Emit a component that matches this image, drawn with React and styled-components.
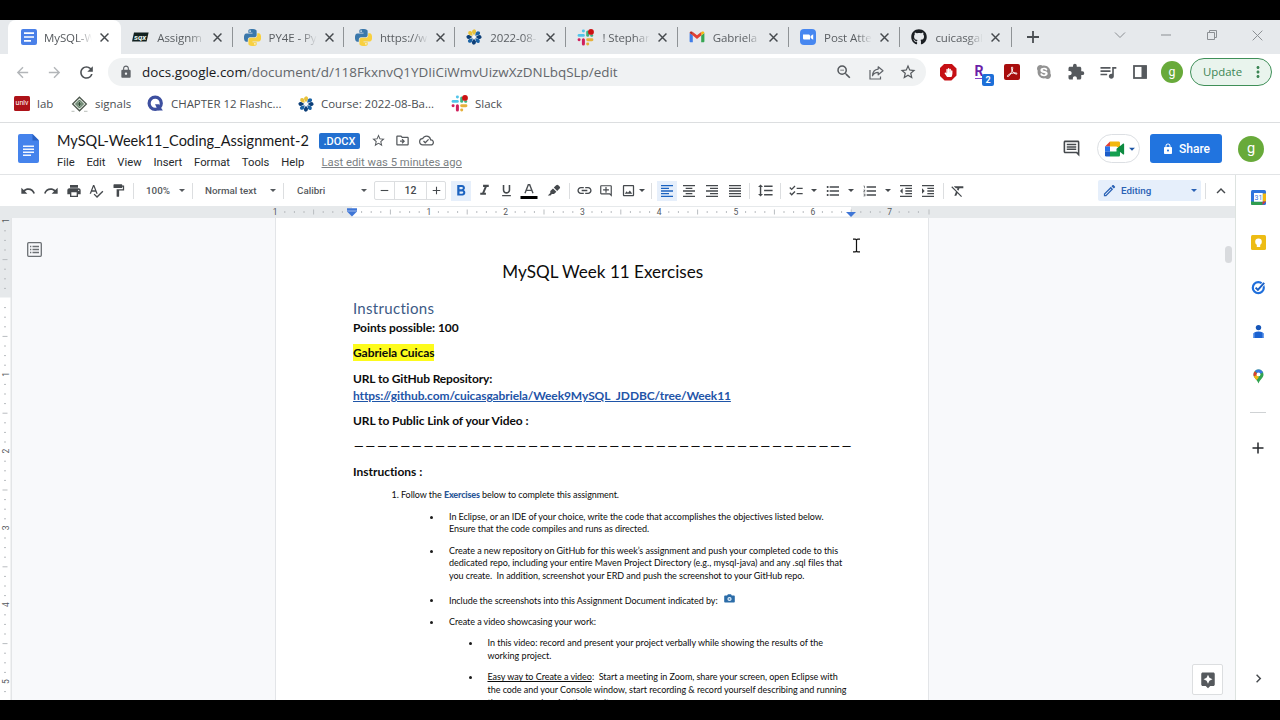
import styled, { createGlobalStyle, css } from "styled-components";
import {
  MdUndo,
  MdRedo,
  MdPrint,
  MdSpellcheck,
  MdFormatPaint,
  MdArrowDropDown,
  MdAdd,
  MdRemove,
  MdFormatBold,
  MdFormatItalic,
  MdFormatUnderlined,
  MdLink,
  MdOutlineAddComment,
  MdOutlineImage,
  MdFormatAlignLeft,
  MdFormatAlignCenter,
  MdFormatAlignRight,
  MdFormatAlignJustify,
  MdFormatLineSpacing,
  MdChecklist,
  MdFormatListBulleted,
  MdFormatListNumbered,
  MdFormatIndentDecrease,
  MdFormatIndentIncrease,
  MdFormatClear,
  MdOutlineEdit,
  MdKeyboardArrowUp,
  MdStarBorder,
  MdOutlineDriveFileMove,
  MdOutlineCloudDone,
  MdOutlineInsertComment,
  MdOutlineLock,
  MdLock,
  MdExtension,
  MdQueueMusic,
  MdMoreVert,
  MdAssistant,
  MdChevronRight,
  MdArrowBack,
  MdArrowForward,
  MdRefresh,
  MdZoomOut,
} from "react-icons/md";
import { FaGithub, FaSkype, FaHandPaper } from "react-icons/fa";

const DocsFavicon = () => (
  <svg width="16" height="16" viewBox="0 0 16 16">
    <rect width="16" height="16" rx="2" fill="#4a80e8" />
    <path d="M3 4.2h10M3 8h10M3 11.8h7" stroke="#fff" strokeWidth="1.7" />
  </svg>
);

const SqxIcon = () => (
  <svg width="17" height="16" viewBox="0 0 17 16">
    <path d="M2 3.5h14.6l-2 9H0z" fill="#12211f" />
    <text x="2" y="10.8" fontSize="8" fontWeight="bold" fontStyle="italic" fontFamily="Roboto, sans-serif" fill="#e9f5ef">
      sqx
    </text>
  </svg>
);

const PythonIcon = () => (
  <svg width="17" height="17" viewBox="0 0 24 24">
    <path
      fill="#3b78ab"
      d="M14.25.18l.9.2.73.26.59.3.45.32.34.34.25.34.16.33.1.3.04.26.02.2-.01.13V8.5l-.05.63-.13.55-.21.46-.26.38-.3.31-.33.25-.35.19-.35.14-.33.1-.3.07-.26.04-.21.02H8.77l-.69.05-.59.14-.5.22-.41.27-.33.32-.27.35-.2.36-.15.37-.1.35-.07.32-.04.27-.02.21v3.06H3.17l-.21-.03-.28-.07-.32-.12-.35-.18-.36-.26-.36-.36-.35-.46-.32-.59-.28-.73-.21-.88-.14-1.05-.05-1.23.06-1.22.16-1.04.24-.87.32-.71.36-.57.4-.44.42-.33.42-.24.4-.16.36-.1.32-.05.24-.01h.16l.06.01h8.16v-.83H6.18l-.01-2.75-.02-.37.05-.34.11-.31.17-.28.25-.26.31-.23.38-.2.44-.18.51-.15.58-.12.64-.1.71-.06.77-.04.84-.02 1.27.05z"
    />
    <path
      fill="#f8d040"
      d="M21.1 6.11l.28.06.32.12.35.18.36.27.36.35.35.47.32.59.28.73.21.88.14 1.04.05 1.23-.06 1.23-.16 1.04-.24.86-.32.71-.36.57-.4.45-.42.33-.42.24-.4.16-.36.09-.32.05-.24.02-.16-.01h-8.22v.82h5.84l.01 2.76.02.36-.05.34-.11.31-.17.29-.25.25-.31.24-.38.2-.44.17-.51.15-.58.13-.64.09-.71.07-.77.04-.84.01-1.27-.04-1.07-.14-.9-.2-.73-.25-.59-.3-.45-.33-.34-.34-.25-.34-.16-.33-.1-.3-.04-.25-.02-.2.01-.13v-5.34l.05-.64.13-.54.21-.46.26-.38.3-.32.33-.24.35-.2.35-.14.33-.1.3-.06.26-.04.21-.02.13-.01h5.84l.69-.05.59-.14.5-.21.41-.28.33-.32.27-.35.2-.36.15-.36.1-.35.07-.32.04-.28.02-.21V6.07h2.09z"
    />
    <circle cx="8.6" cy="3" r="1.1" fill="#e6f0f7" />
    <circle cx="15.4" cy="21" r="1.1" fill="#fff8dc" />
  </svg>
);

const FlowerIcon = () => (
  <svg width="16" height="16" viewBox="0 0 16 16">
    {[0, 45, 90, 135, 180, 225, 270, 315].map((angle) => (
      <path
        key={angle}
        d="M8 6.3L6.2 3.7Q5.5.9 8.3.3 10.700 1 9.900 3.400z"
        fill={angle === 0 || angle === 315 ? "#e8c23c" : angle % 90 ? "#1b63a5" : "#0d3f78"}
        transform={`rotate(${angle} 8 8)`}
      />
    ))}
    <circle cx="8" cy="8" r="1.5" fill="#f6f8fa" />
  </svg>
);

const SlackIcon = () => (
  <svg width="17" height="17" viewBox="0 0 17 17">
    <rect x="4.9" y="0.4" width="3" height="3" rx="1.4" fill="#52c5ea" />
    <rect x="0.6" y="4.9" width="7.2" height="2.9" rx="1.4" fill="#52c5ea" />
    <rect x="9.2" y="1.4" width="3" height="6.4" rx="1.5" fill="#3eb27f" />
    <rect x="13.2" y="5.4" width="3" height="2.4" rx="1.2" fill="#3eb27f" />
    <rect x="9.2" y="9.3" width="7.2" height="2.9" rx="1.4" fill="#e6b13a" />
    <rect x="9.2" y="13.4" width="3" height="3" rx="1.4" fill="#e6b13a" />
    <rect x="0.6" y="9.3" width="3" height="2.9" rx="1.4" fill="#d0205c" />
    <rect x="4.9" y="9.3" width="3" height="7.2" rx="1.5" fill="#d0205c" />
    <circle cx="14" cy="2.9" r="2.9" fill="#cc1111" />
  </svg>
);

const GmailIcon = () => (
  <svg width="16" height="16" viewBox="0 0 16 16">
    <path d="M.6 4v8.2c0 .6.5 1 1 1h2.2V6.4z" fill="#3f7de8" />
    <path d="M15.4 4v8.2c0 .6-.5 1-1 1h-2.2V6.4z" fill="#36a653" />
    <path d="M12.2 6.4l3.2-2.4c0-1.6-1.7-2-2.7-1.2l-.5.4z" fill="#f4b90f" />
    <path d="M3.8 6.4L.6 4c0-1.6 1.7-2 2.7-1.2l.5.4z" fill="#bb2d24" />
    <path d="M3.8 6.6V3.1L8 6.3l4.2-3.2v3.5L8 9.9z" fill="#e34133" />
  </svg>
);

const ZoomIcon = () => (
  <svg width="16" height="16" viewBox="0 0 16 16">
    <rect width="16" height="16" rx="4" fill="#4787f0" />
    <path d="M3 5.4h5.6c.8 0 1.4.6 1.4 1.4v3.8H4.4c-.8 0-1.4-.6-1.4-1.4zM10.6 7l2.6-1.7v5.4L10.6 9z" fill="#fff" />
  </svg>
);

const SignalsIcon = () => (
  <svg width="17" height="16" viewBox="0 0 17 16">
    <path d="M8.5 1.2L15.4 8l-6.9 6.8L1.6 8z" fill="#e3ece2" stroke="#4b554b" strokeWidth="1.2" />
    <path d="M8.5 4l4 4-4 4-4-4z" fill="#8ba58e" stroke="#3e5b45" strokeWidth=".8" />
    <path d="M6.5 8h4M8.5 6v4" stroke="#2f4635" strokeWidth=".9" />
    <path d="M.5 15.3h3M13 15.3h3.5" stroke="#b9beb9" />
  </svg>
);

const QuizletIcon = () => (
  <svg width="17" height="17" viewBox="0 0 17 17">
    <circle cx="8.2" cy="8.2" r="6.1" fill="none" stroke="#3d4f9f" strokeWidth="3.2" />
    <path d="M8 9.3h3.8l4 6.2h-4.6z" fill="#3d4f9f" />
  </svg>
);

const ShareIcon = () => (
  <svg width="17" height="17" viewBox="0 0 17 17" fill="none" stroke="#5f6368" strokeWidth="1.2">
    <path d="M2 6v9h10.5v-2.6" />
    <path d="M10.2 2.8l4.8 4-4.8 4V8.4C7.2 8.4 5.6 9.5 4.5 11.8 4.7 8 6.6 5.4 10.2 5.1z" strokeLinejoin="round" />
  </svg>
);

const AcrobatIcon = () => (
  <svg width="16" height="16" viewBox="0 0 16 16">
    <rect width="16" height="16" rx="2" fill="#a80d0d" />
    <path
      d="M8 3c-1 0-.6 2.6.6 4.4C10 9.6 12.9 10.7 13.1 9.7 13.2 8.5 8.5 8.6 5.5 10.1 3 11.4 3 12.9 4.1 12.5 6 11.6 9 6 8.7 3.7 8.6 3.2 8.3 3 8 3z"
      fill="none"
      stroke="#fff"
      strokeWidth="1"
    />
  </svg>
);

const DocsLogo = () => (
  <svg width="21" height="29" viewBox="0 0 21 29">
    <path d="M2 0h12.5L21 6.5V27a2 2 0 0 1-2 2H2a2 2 0 0 1-2-2V2a2 2 0 0 1 2-2z" fill="#4583ec" />
    <path d="M14.5 0L21 6.5h-6.5z" fill="#2a62c4" />
    <path d="M5 12.3h11M5 15.3h11M5 18.3h11M5 21.3h8" stroke="#f3f7ff" strokeWidth="1.4" />
  </svg>
);

const MeetIcon = () => (
  <svg width="20" height="16" viewBox="0 0 20 16">
    <path d="M0 5.4h5V.4z" fill="#e34133" />
    <path d="M0 5.4h5v5.2H0z" fill="#2a72e8" />
    <path d="M0 10.6h5v5H1.3A1.3 1.3 0 0 1 0 14.3z" fill="#1b5cc8" />
    <path d="M5 .4h8.7c.7 0 1.3.6 1.3 1.3V8l-3.5-2.6H5z" fill="#f2b70c" />
    <path d="M5 10.6h6.5V8L15 5v9.3c0 .7-.6 1.3-1.3 1.3H5z" fill="#14a050" />
    <path d="M11.5 8l6.7-5.5c.4-.3.9 0 .9.5v10c0 .5-.5.8-.9.5z" fill="#0c8a40" />
  </svg>
);

const CalendarIcon = () => (
  <svg width="15" height="15" viewBox="0 0 15 15">
    <rect width="15" height="15" rx="1.5" fill="#2f74dd" />
    <path d="M11.5 3.5H15v8h-3.5z" fill="#f2b90f" />
    <path d="M0 11.5h11.5V15h-10A1.5 1.5 0 0 1 0 13.5z" fill="#2f9d4e" />
    <path d="M11.5 11.5H15L11.5 15z" fill="#d93a2c" />
    <rect x="3" y="3" width="8.7" height="8.7" fill="#fff" />
    <text x="7.4" y="10" fontSize="7" textAnchor="middle" fontFamily="Roboto, sans-serif" fill="#2f74dd">
      31
    </text>
  </svg>
);

const KeepIcon = () => (
  <svg width="15" height="15" viewBox="0 0 15 15">
    <rect width="15" height="15" rx="1.5" fill="#edbc14" />
    <circle cx="7.5" cy="6.7" r="3.3" fill="#fff" />
    <path d="M5.8 9h3.4v3H5.8z" fill="#fff" />
  </svg>
);

const TasksIcon = () => (
  <svg width="15" height="15" viewBox="0 0 15 15" fill="none">
    <circle cx="7.3" cy="7.7" r="5.5" stroke="#1f6fdc" strokeWidth="2.2" />
    <path d="M4.6 7.6l2.3 2.3 6.3-7" stroke="#fff" strokeWidth="3.2" />
    <path d="M4.6 7.6l2.3 2.3 6.3-7" stroke="#1a5fc4" strokeWidth="2" />
  </svg>
);

const ContactsIcon = () => (
  <svg width="13" height="15" viewBox="0 0 13 15">
    <circle cx="6.5" cy="3.6" r="2.7" fill="#1656b8" />
    <path d="M1 11.2C1 8.8 3 7.5 6.5 7.5s5.5 1.3 5.5 3.7V13c0 .6-.4 1-1 1H2c-.6 0-1-.4-1-1z" fill="#1b62d0" />
    <path d="M1 11.2C1 9.9 1.5 9 2.5 8.4V14H2c-.6 0-1-.4-1-1zM12 11.2c0-1.3-.5-2.2-1.5-2.8V14h.5c.6 0 1-.4 1-1z" fill="#6fa0ee" />
  </svg>
);

const MapsIcon = () => (
  <svg width="11" height="15" viewBox="0 0 11 15">
    <defs>
      <clipPath id="pin">
        <path d="M5.5.5a5 5 0 0 1 5 5c0 3.5-3.5 4.8-5 9-1.5-4.2-5-5.5-5-9a5 5 0 0 1 5-5z" />
      </clipPath>
    </defs>
    <g clipPath="url(#pin)">
      <rect width="11" height="15" fill="#32a350" />
      <path d="M0 0h11v3L5.5 5.5z" fill="#3b78e0" />
      <path d="M0 1l5.5 4.5L0 9z" fill="#d8402f" />
      <path d="M0 10V8l5.5-3v4l-3 3z" fill="#f0b914" />
    </g>
    <circle cx="5.5" cy="5.4" r="1.9" fill="#fff" />
  </svg>
);

const TextColorIcon = () => (
  <svg width="18" height="18" viewBox="0 0 18 18">
    <path d="M5 11.2L8.3 2.8h1.4L13 11.2M6.4 8.4h5.2" fill="none" stroke="#4c5054" strokeWidth="1.4" />
    <rect x="0.5" y="14" width="17" height="3" fill="#000" />
  </svg>
);

const MarkerIcon = () => (
  <svg width="14" height="14" viewBox="0 0 14 14" fill="#45494d">
    <path d="M9.2 1.2a1.5 1.5 0 0 1 2.1 0l1.3 1.3a1.5 1.5 0 0 1 0 2.1L10.2 7 6.8 3.6z" />
    <path d="M6 4.4L9.4 7.8 7 10.1H4.9L3.5 11.5H.8l2.5-2.6V7.1z" />
  </svg>
);

const OutlineIcon = () => (
  <svg width="15" height="15" viewBox="0 0 15 15" fill="none" stroke="#6c7074">
    <rect x="0.7" y="0.7" width="13.6" height="13.6" rx="1" strokeWidth="1.3" />
    <path d="M3 4.5h1.3M3 7.5h1.3M3 10.5h1.3M5.5 4.5H12M5.5 7.5H12M5.5 10.5H12" strokeWidth="1.3" />
  </svg>
);

const CameraIcon = () => (
  <svg width="11" height="10" viewBox="0 0 11 10">
    <path d="M1 1.5h2L4 .3h3l.8 1.2H10c.5 0 .8.3.8.8v5.5c0 .5-.3.8-.8.8H1c-.5 0-.8-.3-.8-.8V2.3c0-.5.3-.8.8-.8z" fill="#2b6ca8" />
    <circle cx="5.5" cy="5" r="2.1" fill="#e9f3fb" />
    <circle cx="5.5" cy="5" r="1" fill="#5b93c5" />
  </svg>
);

const IBeam = () => (
  <svg width="9" height="15" viewBox="0 0 9 15" fill="none" stroke="#111" strokeWidth="1.2">
    <path d="M1 1.2h2.3q1.2 0 1.2 1v10.6q0 1-1.2 1H1M8 1.2H5.7q-1.2 0-1.2 1M8 13.8H5.7q-1.2 0-1.2-1" />
  </svg>
);

const Cross = ({ size, thin }) => (
  <svg width={size} height={size} viewBox="0 0 10 10" stroke={thin ? "#8b8f93" : "#45494d"} strokeWidth={thin ? 0.9 : 1.6}>
    <path d="M.6.6l8.8 8.8M9.4.6L.6 9.4" />
  </svg>
);

const tabs = [
  { icon: <DocsFavicon />, title: "MySQL-W", active: true },
  { icon: <SqxIcon />, title: "Assignm" },
  { icon: <PythonIcon />, title: "PY4E - Py" },
  { icon: <PythonIcon />, title: "https://w" },
  { icon: <FlowerIcon />, title: "2022-08-" },
  { icon: <SlackIcon />, title: "! Stephar" },
  { icon: <GmailIcon />, title: "Gabriela" },
  { icon: <ZoomIcon />, title: "Post Atte" },
  { icon: <FaGithub size={16} color="#1b1f23" />, title: "cuicasgal" },
];

const IN = 76.8;
const ORIGIN = 352;

const HorizontalRuler = () => {
  const ticks = [];
  for (let i = -7; i <= 59; i++) {
    if (i % 8 !== 0) ticks.push(i);
  }
  return (
    <svg width="1235" height="12" viewBox="0 0 1235 12">
      <rect width="1235" height="12" fill="#e6e9eb" />
      <rect x={ORIGIN} y="1" width="499" height="9.5" fill="#fff" />
      {ticks.map((i) => (
        <rect key={i} x={ORIGIN + (i * IN) / 8 - 0.5} y={i % 4 ? 5 : 3.5} width="1" height={i % 4 ? 2 : 5} fill="#b9bdc0" />
      ))}
      {[-1, 1, 2, 3, 4, 5, 6, 7].map((n) => (
        <text key={n} x={ORIGIN + n * IN} y="9" fontSize="8.5" textAnchor="middle" fontFamily="Roboto, sans-serif" fill="#55595d">
          {Math.abs(n)}
        </text>
      ))}
      <rect x="928.5" y="3.5" width="1" height="5" fill="#b9bdc0" />
      <path d="M347 2.2h10v3.4l-5 4.8-5-4.8z" fill="#3f76d6" />
      <path d="M347 5h10" stroke="#dfe9fb" strokeWidth=".6" />
      <path d="M846 6h10l-5 5z" fill="#3f76d6" />
    </svg>
  );
};

const VerticalRuler = () => {
  const ticks = [];
  for (let i = -7; i <= 41; i++) {
    if (i % 8 !== 0) ticks.push(i);
  }
  return (
    <svg width="12" height="482" viewBox="0 0 12 482">
      <rect width="11" height="482" fill="#fff" />
      <rect width="11" height="79.5" fill="#e6e9eb" />
      <rect x="10.5" width="1.5" height="482" fill="#e3e5e7" />
      {ticks.map((i) => (
        <rect key={i} x={i % 4 ? 4 : 2.5} y={79.5 + (i * IN) / 8} width={i % 4 ? 2 : 5} height="1" fill="#b9bdc0" />
      ))}
      {[-1, 1, 2, 3, 4, 5].map((n) => (
        <text
          key={n}
          transform={`translate(8.5 ${79.5 + n * IN}) rotate(-90)`}
          fontSize="8.5"
          textAnchor="middle"
          fontFamily="Roboto, sans-serif"
          fill="#55595d"
        >
          {Math.abs(n)}
        </text>
      ))}
    </svg>
  );
};

const App = () => {
  return (
    <Screen>
      <GlobalStyle />
      <TabStrip>
        {tabs.map((tab, i) => (
          <Tab key={i} active={tab.active ? 1 : 0}>
            <TabIcon>{tab.icon}</TabIcon>
            <TabTitle active={tab.active ? 1 : 0}>{tab.title}</TabTitle>
            <Cross size={9} />
          </Tab>
        ))}
        <NewTab>
          <svg width="12" height="12" viewBox="0 0 12 12" stroke="#4a4e52" strokeWidth="1.8">
            <path d="M6 0v12M0 6h12" />
          </svg>
        </NewTab>
        <WindowButtons>
          <svg width="12" height="12" viewBox="0 0 12 12" fill="none" stroke="#8b8f93">
            <path d="M1 3.5l5 5 5-5" />
          </svg>
          <svg width="12" height="12" viewBox="0 0 12 12" stroke="#8b8f93">
            <path d="M1 6h10" />
          </svg>
          <svg width="12" height="12" viewBox="0 0 12 12" fill="none" stroke="#8b8f93">
            <path d="M1.5 3.5h7v7h-7zM3.5 3.5v-2h7v7h-2" />
          </svg>
          <Cross size={11} thin />
        </WindowButtons>
      </TabStrip>

      <AddressRow>
        <NavIcon>
          <MdArrowBack size={17} color="#b3b6b9" />
        </NavIcon>
        <NavIcon>
          <MdArrowForward size={17} color="#b3b6b9" />
        </NavIcon>
        <NavIcon>
          <MdRefresh size={19} color="#4d5155" />
        </NavIcon>
        <Omnibox>
          <MdLock size={14} color="#5f6368" />
          <Url>
            <Domain>docs.google.com</Domain>/document/d/118FkxnvQ1YDIiCiWmvUizwXzDNLbqSLp/edit
          </Url>
          <OmniIcons>
            <MdZoomOut size={18} />
            <ShareIcon />
            <MdStarBorder size={18} />
          </OmniIcons>
        </Omnibox>
        <Extensions>
          <Ext>
            <StopSign>
              <FaHandPaper size={9} />
            </StopSign>
          </Ext>
          <Ext>
            <Rakuten>R</Rakuten>
            <Count>2</Count>
          </Ext>
          <Ext>
            <AcrobatIcon />
          </Ext>
          <Ext>
            <FaSkype size={16} color="#929292" />
          </Ext>
          <Ext>
            <MdExtension size={18} />
          </Ext>
          <Ext>
            <MdQueueMusic size={20} />
          </Ext>
          <Ext>
            <svg width="14" height="14" viewBox="0 0 14 14">
              <rect x="1" y="1" width="12" height="12" fill="#fff" stroke="#55595d" strokeWidth="1.8" />
              <rect x="8.5" y="1" width="5" height="12" fill="#55595d" />
            </svg>
          </Ext>
          <Avatar size={22}>g</Avatar>
        </Extensions>
        <Update>
          Update
          <MdMoreVert size={18} />
        </Update>
      </AddressRow>

      <Bookmarks>
        <Bookmark w={57}>
          <UnlvIcon>unlv</UnlvIcon>lab
        </Bookmark>
        <Bookmark w={76}>
          <SignalsIcon />
          signals
        </Bookmark>
        <Bookmark w={151}>
          <QuizletIcon />
          CHAPTER 12 Flashc...
        </Bookmark>
        <Bookmark w={153}>
          <FlowerIcon />
          Course: 2022-08-Ba...
        </Bookmark>
        <Bookmark>
          <SlackIcon />
          Slack
        </Bookmark>
      </Bookmarks>

      <Header>
        <DocsLogo />
        <HeaderMain>
          <TitleRow>
            <DocName>MySQL-Week11_Coding_Assignment-2</DocName>
            <Badge>.DOCX</Badge>
            <TitleIcons>
              <MdStarBorder size={15} />
              <MdOutlineDriveFileMove size={15} />
              <MdOutlineCloudDone size={15} />
            </TitleIcons>
          </TitleRow>
          <MenuRow>
            <span>File</span>
            <span>Edit</span>
            <span>View</span>
            <span>Insert</span>
            <span>Format</span>
            <span>Tools</span>
            <span>Help</span>
            <LastEdit>Last edit was 5 minutes ago</LastEdit>
          </MenuRow>
        </HeaderMain>
        <MdOutlineInsertComment size={19} color="#45494d" />
        <MeetButton>
          <MeetIcon />
          <MdArrowDropDown size={14} color="#1c55a5" />
        </MeetButton>
        <ShareButton>
          <MdLock size={12} />
          Share
        </ShareButton>
        <Avatar size={26}>g</Avatar>
      </Header>

      <Body>
        <Editor>
          <Toolbar>
            <Tool w={22}><MdUndo /></Tool>
            <Tool w={23}><MdRedo /></Tool>
            <Tool w={23}><MdPrint /></Tool>
            <Tool w={22}><MdSpellcheck /></Tool>
            <Tool w={23}><MdFormatPaint size={15} /></Tool>
            <Sep w={7} />
            <Dropdown w={53} left={9} right={2}>100% <Caret /></Dropdown>
            <Sep w={5} />
            <Dropdown w={86} left={10} right={2}>Normal text <Caret /></Dropdown>
            <Sep w={5} />
            <Dropdown w={88} left={11} right={4}>Calibri <Caret /></Dropdown>
            <SizeBox>
              <span><MdRemove size={13} /></span>
              <span>12</span>
              <span><MdAdd size={13} /></span>
            </SizeBox>
            <Tool w={20} active={1}><MdFormatBold size={18} /></Tool>
            <Tool w={26}><MdFormatItalic size={17} /></Tool>
            <Tool w={18}><MdFormatUnderlined size={15} /></Tool>
            <Tool w={28}><TextColorIcon /></Tool>
            <Tool w={21}><MarkerIcon /></Tool>
            <Sep w={11} />
            <Tool w={18}><MdLink size={17} /></Tool>
            <Tool w={26}><MdOutlineAddComment size={14} /></Tool>
            <Tool w={18}><MdOutlineImage size={15} /></Tool>
            <Tool w={9}><Caret /></Tool>
            <Sep w={11} />
            <Tool w={20} active={1}><MdFormatAlignLeft size={16} /></Tool>
            <Tool w={24}><MdFormatAlignCenter size={16} /></Tool>
            <Tool w={22}><MdFormatAlignRight size={16} /></Tool>
            <Tool w={23}><MdFormatAlignJustify size={16} /></Tool>
            <Sep w={7} />
            <Tool w={24}><MdFormatLineSpacing size={17} /></Tool>
            <Sep w={7} />
            <Tool w={24}><MdChecklist size={16} /></Tool>
            <Tool w={11}><Caret /></Tool>
            <Tool w={28}><MdFormatListBulleted size={16} /></Tool>
            <Tool w={7}><Caret /></Tool>
            <Tool w={31}><MdFormatListNumbered size={16} /></Tool>
            <Tool w={5}><Caret /></Tool>
            <Tool w={32}><MdFormatIndentDecrease size={16} /></Tool>
            <Tool w={12}><MdFormatIndentIncrease size={16} /></Tool>
            <Sep w={18} />
            <Tool w={12}><MdFormatClear size={16} /></Tool>
            <ModeButton>
              <MdOutlineEdit size={15} />
              <span>Editing</span>
              <Caret />
            </ModeButton>
            <Sep w={9} />
            <Tool w={21}><MdKeyboardArrowUp size={18} /></Tool>
          </Toolbar>
          <HorizontalRuler />
          <Canvas>
            <VerticalRuler />
            <OutlineColumn>
              <OutlineIcon />
            </OutlineColumn>
            <Page>
              <DocTitle>MySQL Week 11 Exercises</DocTitle>
              <Heading>Instructions</Heading>
              <Strong top={1.5}>Points possible: 100</Strong>
              <Strong top={8.3}>
                <Mark>Gabriela Cuicas</Mark>
              </Strong>
              <Strong top={8.5} track={-0.13}>URL to GitHub Repository:</Strong>
              <Strong top={0}>
                <Link>https://github.com/cuicasgabriela/Week9MySQL_JDDBC/tree/Week11</Link>
              </Strong>
              <Strong top={8.2} track={-0.08}>URL to Public Link of your Video :</Strong>
              <Dashes>{"—".repeat(43)}</Dashes>
              <Strong top={8.5} track={-0.01}>Instructions :</Strong>
              <Step>
                1. Follow the <Keyword>Exercises</Keyword> below to complete this assignment.
              </Step>
              <Item>
                <Line>In Eclipse, or an IDE of your choice, write the code that accomplishes the objectives listed below.</Line>
                <Line>Ensure that the code compiles and runs as directed.</Line>
              </Item>
              <Item>
                <Line>Create a new repository on GitHub for this week’s assignment and push your completed code to this</Line>
                <Line track={-0.01}>
                  dedicated repo, including your entire Maven Project Directory (e.g., mysql-java) and any .sql files that
                </Line>
                <Line>you create.&nbsp; In addition, screenshot your ERD and push the screenshot to your GitHub repo.</Line>
              </Item>
              <Item top={10.8}>
                <Line>
                  Include the screenshots into this Assignment Document indicated by:
                  <Camera>
                    <CameraIcon />
                  </Camera>
                </Line>
              </Item>
              <Item>
                <Line>Create a video showcasing your work:</Line>
              </Item>
              <Item deep={1}>
                <Line track={-0.015}>In this video: record and present your project verbally while showing the results of the</Line>
                <Line track={0}>working project.</Line>
              </Item>
              <Item deep={1}>
                <Line track={-0.04}>
                  <u>Easy way to Create a video</u>:&nbsp; Start a meeting in Zoom, share your screen, open Eclipse with
                </Line>
                <Line track={-0.04}>the code and your Console window, start recording &amp; record yourself describing and running</Line>
                <Line>the program showing the results.</Line>
              </Item>
              <Pointer>
                <IBeam />
              </Pointer>
            </Page>
            <RightColumn>
              <Thumb />
              <Explore>
                <MdAssistant size={18} color="#55595d" />
              </Explore>
            </RightColumn>
          </Canvas>
        </Editor>
        <SidePanel>
          <CalendarIcon />
          <KeepIcon />
          <TasksIcon />
          <ContactsIcon />
          <MapsIcon />
          <PanelLine />
          <svg width="12" height="12" viewBox="0 0 12 12" stroke="#26292c" strokeWidth="1.5">
            <path d="M6 .5v11M.5 6h11" />
          </svg>
          <PanelToggle>
            <MdChevronRight size={17} color="#45494d" />
          </PanelToggle>
        </SidePanel>
      </Body>
    </Screen>
  );
};

const GlobalStyle = createGlobalStyle`
  body {
    margin: 0;
    background: #000;
  }
  svg {
    flex: none;
    display: block;
  }
`;

const Screen = styled.div`
  box-sizing: border-box;
  width: 1280px;
  height: 720px;
  padding: 20px 0;
  display: flex;
  flex-direction: column;
  overflow: hidden;
  background: #000;
  font-family: Roboto, "Liberation Sans", sans-serif;
`;

const TabStrip = styled.div`
  flex: none;
  height: 34px;
  padding-left: 8px;
  display: flex;
  align-items: center;
  background: #e6e9ec;
  font-family: "Open Sans", sans-serif;
`;

const Tab = styled.div`
  box-sizing: border-box;
  width: 111.3px;
  height: 20px;
  padding: 0 11px;
  display: flex;
  align-items: center;
  border-right: 1px solid #8f9396;
  ${(props) =>
    props.active &&
    css`
      width: 113.3px;
      height: 34px;
      padding: 0 11px 0 12px;
      border-right: 0;
      border-radius: 8px 8px 0 0;
      background: #fff;
    `}
`;

const TabIcon = styled.div`
  width: 17px;
  display: flex;
  justify-content: center;
`;

const TabTitle = styled.div`
  width: 48px;
  margin: 0 8px 0 ${(props) => (props.active ? "7px" : "8px")};
  flex: none;
  white-space: nowrap;
  font-size: 11.5px;
  letter-spacing: -0.1px;
  color: ${(props) => (props.active ? "#55595d" : "#5a5e62")};
  mask-image: linear-gradient(90deg, #000 68%, transparent 100%);
`;

const NewTab = styled.div`
  margin-left: 15.5px;
`;

const WindowButtons = styled.div`
  margin: -4px 17.5px 0 auto;
  display: flex;
  align-items: center;
  gap: 34px;
`;

const AddressRow = styled.div`
  flex: none;
  height: 36px;
  padding-left: 6px;
  display: flex;
  align-items: center;
  background: #fff;
  font-family: "Open Sans", sans-serif;
`;

const NavIcon = styled.div`
  width: 32px;
  display: flex;
  justify-content: center;
`;

const Omnibox = styled.div`
  box-sizing: border-box;
  width: 818px;
  height: 28px;
  margin-left: 6px;
  padding: 0 9px 0 11px;
  display: flex;
  align-items: center;
  border-radius: 14px;
  background: #f0f2f3;
`;

const Url = styled.div`
  margin: -1px 0 0 9px;
  font-size: 13.45px;
  color: #63676b;
`;

const Domain = styled.span`
  color: #17181a;
`;

const OmniIcons = styled.div`
  margin-left: auto;
  display: flex;
  align-items: center;
  gap: 14.5px;
  color: #55595d;
`;

const Extensions = styled.div`
  margin-left: 6px;
  display: flex;
  align-items: center;
`;

const Ext = styled.div`
  position: relative;
  width: 32px;
  height: 28px;
  display: flex;
  align-items: center;
  justify-content: center;
  color: #55595d;
`;

const StopSign = styled.div`
  width: 17px;
  height: 17px;
  display: flex;
  align-items: center;
  justify-content: center;
  color: #fff;
  background: #c60f14;
  clip-path: polygon(30% 0, 70% 0, 100% 30%, 100% 70%, 70% 100%, 30% 100%, 0 70%, 0 30%);
`;

const Rakuten = styled.div`
  margin: 0 2px 0 0;
  font: bold 14px/13px Roboto, sans-serif;
  color: #6b1fa8;
  border-bottom: 1.5px solid #8a3fc4;
`;

const Count = styled.div`
  position: absolute;
  left: 18px;
  top: 16px;
  width: 12px;
  height: 12px;
  border-radius: 2px;
  background: #1d6fd8;
  color: #fff;
  font: bold 9px/12px Roboto, sans-serif;
  text-align: center;
`;

const Avatar = styled.div`
  width: ${(props) => props.size}px;
  height: ${(props) => props.size}px;
  margin-left: ${(props) => (props.size > 24 ? 16 : 5)}px;
  display: flex;
  align-items: center;
  justify-content: center;
  border-radius: 50%;
  background: #68aa3a;
  color: #fff;
  font: 400 ${(props) => props.size * 0.56}px/1 Roboto, sans-serif;
`;

const Update = styled.div`
  box-sizing: border-box;
  width: 82px;
  height: 28px;
  margin-left: 7px;
  padding: 0 4px 1px 12px;
  display: flex;
  align-items: center;
  justify-content: space-between;
  border: 1px solid #3f8f58;
  border-radius: 14px;
  background: #e9f4ed;
  color: #3b8554;
  font-size: 11.4px;
`;

const Bookmarks = styled.div`
  flex: none;
  height: 32px;
  padding: 0 0 0 14px;
  display: flex;
  align-items: center;
  border-bottom: 1px solid #dcdee0;
  background: #fff;
  font-family: "Open Sans", sans-serif;
  font-size: 11.45px;
  color: #4a4e52;
`;

const Bookmark = styled.div`
  width: ${(props) => (props.w ? props.w + "px" : "auto")};
  margin-top: -5px;
  display: flex;
  align-items: center;
  gap: 7px;
  white-space: nowrap;
`;

const UnlvIcon = styled.div`
  width: 16px;
  height: 15px;
  border-radius: 1.5px;
  background: #ad1218;
  color: #fff;
  font: 7px/15px Roboto, sans-serif;
  text-align: center;
`;

const Header = styled.div`
  box-sizing: border-box;
  flex: none;
  height: 52px;
  padding: 0 16px 0 18px;
  display: flex;
  align-items: center;
  background: #fff;
  border-bottom: 1px solid #e2e4e6;
`;

const HeaderMain = styled.div`
  flex: 1;
  margin-left: 18px;
  padding-top: 7px;
`;

const TitleRow = styled.div`
  height: 20px;
  display: flex;
  align-items: center;
`;

const DocName = styled.div`
  width: 252px;
  font: 14.5px/20px Lato, sans-serif;
  color: #17181a;
  white-space: nowrap;
`;

const Badge = styled.div`
  width: 41px;
  height: 16px;
  margin-left: 10px;
  border-radius: 2px;
  background: #2370d0;
  color: #fff;
  font: 500 11px/17px Roboto, sans-serif;
  text-align: center;
`;

const TitleIcons = styled.div`
  margin: -1px 0 0 11px;
  display: flex;
  gap: 9px;
  color: #55595d;
`;

const MenuRow = styled.div`
  height: 22px;
  display: flex;
  align-items: center;
  gap: 11.8px;
  font-size: 11.25px;
  color: #26292c;
`;

const LastEdit = styled.span`
  margin-left: 5.5px;
  color: #7b7f83;
  text-decoration: underline;
`;

const MeetButton = styled.div`
  box-sizing: border-box;
  width: 43px;
  height: 29px;
  margin-left: 16.5px;
  padding-left: 7px;
  display: flex;
  align-items: center;
  border: 1px solid #dcdfe3;
  border-radius: 15px;
`;

const ShareButton = styled.div`
  width: 72px;
  height: 29px;
  margin-left: 10px;
  display: flex;
  align-items: center;
  justify-content: center;
  gap: 5px;
  border-radius: 3px;
  background: #2174df;
  color: #fff;
  font: 500 12px Roboto, sans-serif;
`;

const Body = styled.div`
  flex: 1;
  min-height: 0;
  display: flex;
`;

const Editor = styled.div`
  width: 1235px;
  display: flex;
  flex-direction: column;
`;

const Toolbar = styled.div`
  flex: none;
  height: 31px;
  padding: 0 4px 0 17px;
  display: flex;
  align-items: center;
  background: #fff;
`;

const Tool = styled.div`
  flex: none;
  width: ${(props) => props.w}px;
  height: 20px;
  display: flex;
  align-items: center;
  justify-content: center;
  font-size: 16px;
  color: ${(props) => (props.active ? "#1c63c0" : "#45494d")};
  background: ${(props) => (props.active ? "#e6effb" : "transparent")};
`;

const Sep = styled.div`
  flex: none;
  width: 1px;
  height: 16px;
  margin: 0 ${(props) => (props.w - 1) / 2}px;
  background: #dcdee0;
`;

const Caret = styled.i`
  flex: none;
  width: 0;
  border: 3.5px solid transparent;
  border-top: 3.5px solid currentColor;
  border-bottom: 0;
`;

const Dropdown = styled.div`
  box-sizing: border-box;
  flex: none;
  width: ${(props) => props.w}px;
  padding: 0 ${(props) => props.right + 3.5}px 0 ${(props) => props.left}px;
  display: flex;
  align-items: center;
  justify-content: space-between;
  font-size: 9.8px;
  font-weight: 500;
  color: #55595d;
`;

const SizeBox = styled.div`
  box-sizing: border-box;
  flex: none;
  width: 72px;
  height: 19px;
  margin-right: 5px;
  display: grid;
  grid-template-columns: 19px 1fr 19px;
  border: 1px solid #dcdee0;
  border-radius: 2px;
  font-size: 10.5px;
  font-weight: 500;
  color: #45494d;
  span {
    display: flex;
    align-items: center;
    justify-content: center;
  }
  span + span {
    border-left: 1px solid #dcdee0;
  }
`;

const ModeButton = styled.div`
  box-sizing: border-box;
  width: 103px;
  height: 21px;
  margin-left: auto;
  padding: 0 4px;
  display: flex;
  align-items: center;
  border-radius: 2px;
  background: #e6effb;
  color: #2a62b5;
  font-size: 9.8px;
  font-weight: 500;
  span {
    flex: 1;
    margin-left: 4px;
  }
`;

const Canvas = styled.div`
  flex: 1;
  min-height: 0;
  display: flex;
  overflow: hidden;
  background: #f8f9fb;
`;

const OutlineColumn = styled.div`
  width: 248.4px;
  padding: 24px 0 0 15px;
`;

const Page = styled.div`
  position: relative;
  box-sizing: border-box;
  width: 654px;
  height: 520px;
  padding: 42px 75px 0 76.6px;
  background: #fff;
  border-left: 1px solid #e3e5e8;
  border-right: 1px solid #e3e5e8;
  font-family: Lato, sans-serif;
  color: #0c0c0c;
`;

const DocTitle = styled.div`
  margin-left: -1px;
  font-size: 17.1px;
  line-height: 24px;
  text-align: center;
`;

const Heading = styled.div`
  margin-top: 13.5px;
  font-size: 15px;
  line-height: 20px;
  letter-spacing: 0.3px;
  color: #3c5a86;
`;

const Strong = styled.div`
  margin-top: ${(props) => props.top}px;
  font-size: 12px;
  font-weight: 700;
  line-height: 17px;
  letter-spacing: ${(props) => props.track ?? -0.06}px;
  white-space: nowrap;
`;

const Mark = styled.span`
  background: #fdfb1c;
  padding: 1px 0;
`;

const Link = styled.span`
  color: #1f55a8;
  letter-spacing: -0.105px;
  text-decoration: underline;
`;

const Dashes = styled(Strong)`
  margin: 8.5px 0 0 1px;
  letter-spacing: 2.04px;
`;

const Step = styled.div`
  margin: 9.4px 0 0 38.5px;
  font-size: 9px;
  line-height: 12.7px;
  letter-spacing: -0.06px;
`;

const Keyword = styled.span`
  font-weight: 900;
  letter-spacing: -0.15px;
  color: #2b5797;
`;

const Item = styled.div`
  position: relative;
  margin: ${(props) => props.top ?? 8.6}px 0 0 ${(props) => (props.deep ? 134.5 : 96)}px;
  font-size: 9px;
  line-height: 12.7px;
  &::before {
    content: "";
    position: absolute;
    left: -18.5px;
    top: 5px;
    width: 3px;
    height: 3px;
    border-radius: 50%;
    background: #1b1b1b;
  }
`;

const Line = styled.div`
  white-space: nowrap;
  letter-spacing: ${(props) => props.track ?? -0.05}px;
`;

const Camera = styled.span`
  display: inline-block;
  margin-left: 6px;
  line-height: 0;
`;

const Pointer = styled.div`
  position: absolute;
  left: 575.5px;
  top: 20px;
`;

const RightColumn = styled.div`
  flex: 1;
  padding: 28px 3px 5px 0;
  display: flex;
  flex-direction: column;
  align-items: flex-end;
  justify-content: space-between;
`;

const Thumb = styled.div`
  width: 7px;
  height: 17px;
  border-radius: 4px;
  background: #d9dbde;
`;

const Explore = styled.div`
  box-sizing: border-box;
  width: 31px;
  height: 31px;
  margin-right: 9px;
  display: flex;
  align-items: center;
  justify-content: center;
  border: 1px solid #dcdee0;
  border-radius: 2px;
  background: #fff;
`;

const SidePanel = styled.div`
  box-sizing: border-box;
  width: 45px;
  padding: 15px 0 13px;
  display: flex;
  flex-direction: column;
  align-items: center;
  gap: 29.8px;
  border-left: 1px solid #dde3e0;
  background: #fff;
`;

const PanelLine = styled.div`
  width: 16px;
  height: 1px;
  margin: -2px 0 -1px;
  background: #cfd2d4;
`;

const PanelToggle = styled.div`
  margin-top: auto;
`;

export default App;
